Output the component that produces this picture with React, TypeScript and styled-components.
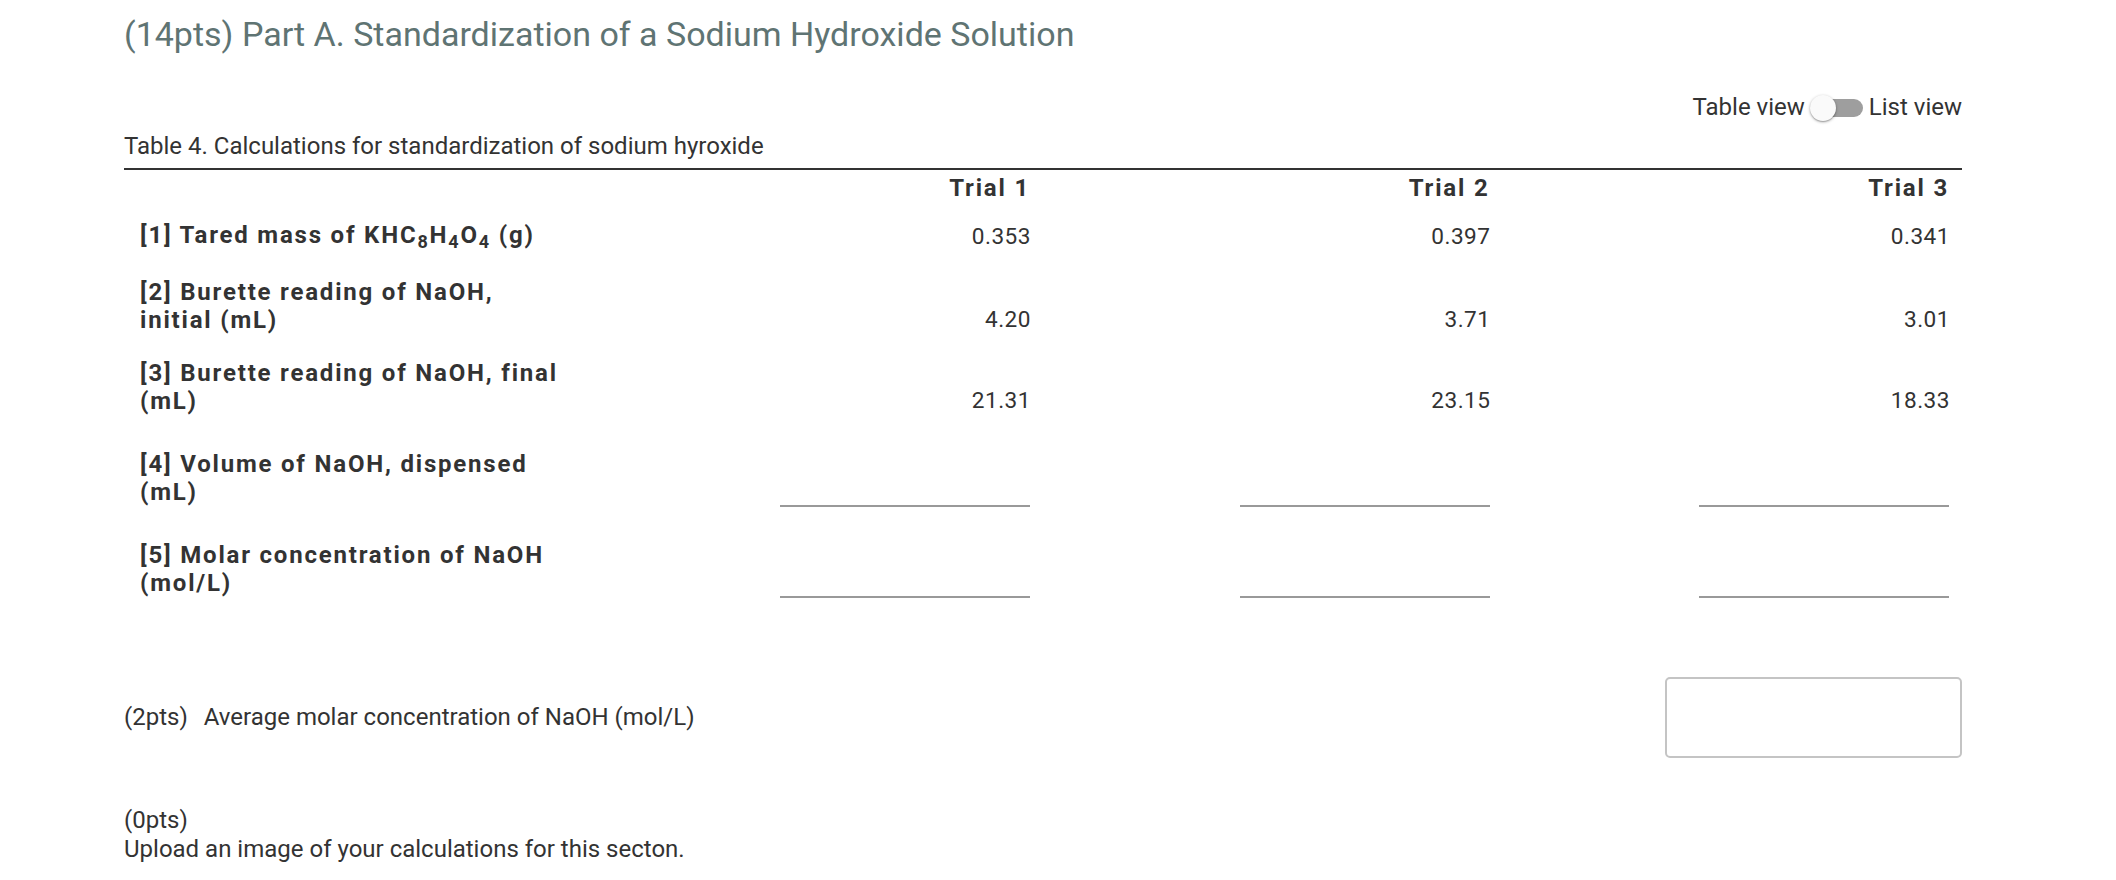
import React from "react";
import styled, { createGlobalStyle } from "styled-components";

const Global = createGlobalStyle`
  html, body { margin: 0; padding: 0; background: #fff; }
  body { font-family: Roboto, "Noto Sans", Arial, sans-serif; color: #333; }
`;

const Page = styled.div`
  width: 1838px;
  padding: 14px 0 0 124px;
  font-size: 24px;
  line-height: 29px;
`;

const Title = styled.h2`
  margin: 0;
  font-size: 34px;
  font-weight: 400;
  line-height: 40px;
  color: #5f7473;
`;

const ToggleBar = styled.div`
  display: flex;
  justify-content: flex-end;
  align-items: center;
  gap: 6px;
  margin-top: 39px;
  color: #333;
`;

const Track = styled.span`
  position: relative;
  display: inline-block;
  width: 52px;
  height: 18px;
  border-radius: 9px;
  background: #9e9e9e;
`;

const Thumb = styled.span`
  position: absolute;
  left: -1px;
  top: -4px;
  width: 26px;
  height: 26px;
  border-radius: 50%;
  background: #fafafa;
  box-shadow: 0 1px 3px rgba(0, 0, 0, 0.35), 0 1px 1px rgba(0, 0, 0, 0.15);
`;

const Caption = styled.div`
  margin-top: 10px;
  padding-bottom: 7px;
  border-bottom: 2px solid #333;
`;

const Row = styled.div<{ $pt: number; $pb: number }>`
  display: grid;
  grid-template-columns: repeat(4, 1fr);
  align-items: end;
  padding: ${(p) => p.$pt}px 0 ${(p) => p.$pb}px;
`;

const Label = styled.div<{ $lift?: number }>`
  padding: 0 16px ${(p) => p.$lift ?? 0}px;
  font-weight: 700;
  letter-spacing: 1.8px;
  line-height: 28.5px;
  color: #333;
`;

const HeadCell = styled.div`
  padding: 0 13px;
  text-align: right;
  font-weight: 700;
  letter-spacing: 1.8px;
  color: #333;
`;

const Value = styled.div`
  padding: 0 12px;
  text-align: right;
  font-size: 22.6px;
  letter-spacing: 0.5px;
  line-height: 28.5px;
  color: #333;
`;

const InputCell = styled.div`
  display: flex;
  justify-content: flex-end;
  padding: 0 13px;
`;

const Underline = styled.div`
  width: 250px;
  height: 38px;
  border-bottom: 2px solid #999;
`;

const Sub = styled.sub`
  font-size: 75%;
  vertical-align: -5px;
  line-height: 0;
`;

const AvgRow = styled.div`
  display: flex;
  justify-content: space-between;
  align-items: center;
  margin-top: 67px;
`;

const Pts = styled.span`
  margin-right: 10px;
`;

const Box = styled.div`
  width: 293px;
  height: 77px;
  border: 2px solid #c4c4c4;
  border-radius: 5px;
`;

const Upload = styled.div`
  margin-top: 48px;
`;

const trials = ["Trial 1", "Trial 2", "Trial 3"];

const rows: { label: React.ReactNode; values?: string[]; pt: number; pb: number; lift?: number }[] = [
  {
    label: (
      <>
        [1] Tared mass of KHC<Sub>8</Sub>H<Sub>4</Sub>O<Sub>4</Sub> (g)
      </>
    ),
    values: ["0.353", "0.397", "0.341"],
    pt: 18,
    pb: 12,
    lift: 2,
  },
  { label: "[2] Burette reading of NaOH, initial (mL)", values: ["4.20", "3.71", "3.01"], pt: 14, pb: 12 },
  { label: "[3] Burette reading of NaOH, final (mL)", values: ["21.31", "23.15", "18.33"], pt: 12, pb: 16 },
  { label: "[4] Volume of NaOH, dispensed (mL)", pt: 18, pb: 17 },
  { label: "[5] Molar concentration of NaOH (mol/L)", pt: 17, pb: 12 },
];

export default function App() {
  return (
    <>
      <Global />
      <Page>
        <Title>(14pts) Part A. Standardization of a Sodium Hydroxide Solution</Title>
        <ToggleBar>
          <span>Table view</span>
          <Track>
            <Thumb />
          </Track>
          <span>List view</span>
        </ToggleBar>
        <Caption>Table 4. Calculations for standardization of sodium hyroxide</Caption>
        <Row $pt={4} $pb={0}>
          <div />
          {trials.map((t) => (
            <HeadCell key={t}>{t}</HeadCell>
          ))}
        </Row>
        {rows.map((r, i) => (
          <Row key={i} $pt={r.pt} $pb={r.pb}>
            <Label $lift={r.lift}>{r.label}</Label>
            {r.values
              ? r.values.map((v, j) => <Value key={j}>{v}</Value>)
              : trials.map((t) => (
                  <InputCell key={t}>
                    <Underline />
                  </InputCell>
                ))}
          </Row>
        ))}
        <AvgRow>
          <span>
            <Pts>(2pts)</Pts> Average molar concentration of NaOH (mol/L)
          </span>
          <Box />
        </AvgRow>
        <Upload>
          <div>(0pts)</div>
          <div>Upload an image of your calculations for this secton.</div>
        </Upload>
      </Page>
    </>
  );
}
